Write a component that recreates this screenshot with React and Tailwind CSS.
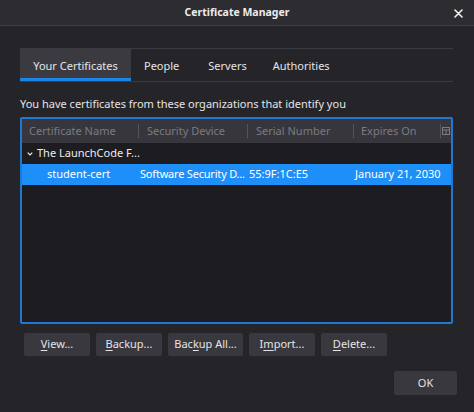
import React from "react";

const font = { fontFamily: '"Noto Sans", "Open Sans", sans-serif' };

function Btn({ children, w }) {
  return (
    <div className={`h-[23px] ${w} bg-[#39383e] rounded-[2px] flex items-center justify-center text-[11px] text-[#e4e4e6] whitespace-nowrap`}>
      {children}
    </div>
  );
}

function U({ children }) {
  return <span className="underline underline-offset-[2px] decoration-[1px]">{children}</span>;
}

export default function App() {
  return (
    <div className="w-[474px] h-[412px] bg-[#252429] flex flex-col overflow-hidden whitespace-nowrap" style={font}>
      <div className="h-[26px] shrink-0 bg-[#2d2c31] border-b border-[#3f3e44] relative flex items-center justify-center">
        <span className="text-[10.5px] font-bold text-[#ececee]">Certificate Manager</span>
        <svg className="absolute right-[11px] top-[9px]" width="9" height="9" viewBox="0 0 9 9">
          <path d="M1 1 L8 8 M8 1 L1 8" stroke="#f0f0f0" strokeWidth="1.6" strokeLinecap="round" />
        </svg>
      </div>
      <div className="flex flex-col pl-[20px] pr-[21px] pt-[22px]">
        <div className="flex h-[34px] border-t border-b border-[#3b3a40] text-[11px] text-[#e4e4e6]">
          <div className="w-[111px] bg-[#3b3a40] flex flex-col">
            <div className="flex-1 flex items-center justify-center pt-[5px]">Your Certificates</div>
            <div className="h-[3px] bg-[#1c86e8]" />
          </div>
          <div className="flex items-center pl-[13px] pt-[3px]">People</div>
          <div className="flex items-center pl-[29px] pt-[3px]">Servers</div>
          <div className="flex items-center pl-[26px] pt-[3px]">Authorities</div>
        </div>
        <div className="mt-[14px] text-[11px] text-[#e4e4e6] leading-[16px]">
          You have certificates from these organizations that identify you
        </div>
        <div className="mt-[5px] h-[207px] border-2 border-[#1f78d1] bg-[#1d1c21] rounded-[2px] flex flex-col text-[11px]">
          <div className="h-[24px] bg-[#37363c] flex items-center text-[#7c7b81]">
            <div className="w-[117px] pl-[7px] border-r border-[#55545a] h-[14px] flex items-center">Certificate Name</div>
            <div className="w-[109px] pl-[8px] border-r border-[#55545a] h-[14px] flex items-center">Security Device</div>
            <div className="w-[106px] pl-[8px] border-r border-[#55545a] h-[14px] flex items-center">Serial Number</div>
            <div className="w-[87px] pl-[7px] border-r border-[#55545a] h-[14px] flex items-center">Expires On</div>
            <div className="flex-1 flex items-center justify-center">
              <svg width="8" height="8" viewBox="0 0 8 8">
                <rect x="0.5" y="0.5" width="7" height="7" fill="none" stroke="#7c7b81" />
                <path d="M0.5 3 H7.5 M4 3 V7.5" stroke="#7c7b81" />
              </svg>
            </div>
          </div>
          <div className="h-[21px] flex items-center text-[#ececee]">
            <svg className="ml-[5px] mr-[4px]" width="6" height="4" viewBox="0 0 6 4">
              <path d="M0.7 0.7 L3 3 L5.3 0.7" stroke="#ececee" strokeWidth="1.2" fill="none" />
            </svg>
            <span>The LaunchCode F...</span>
          </div>
          <div className="h-[21px] bg-[#1e8ef9] flex items-center text-white">
            <div className="w-[118px] pl-[25px]">student-cert</div>
            <div className="w-[109px] tracking-[-0.2px] overflow-hidden">Software Security D...</div>
            <div className="w-[106px]">55:9F:1C:E5</div>
            <div>January 21, 2030</div>
          </div>
        </div>
        <div className="mt-[9px] pl-[4px] flex gap-[6px]">
          <Btn w="w-[66px]"><span><U>V</U>iew...</span></Btn>
          <Btn w="w-[66px]"><span><U>B</U>ackup...</span></Btn>
          <Btn w="w-[75px]"><span>Bac<U>k</U>up All...</span></Btn>
          <Btn w="w-[66px]"><span>I<U>m</U>port...</span></Btn>
          <Btn w="w-[66px]"><span><U>D</U>elete...</span></Btn>
        </div>
        <div className="mt-[15px] flex justify-end mr-[-4px]">
          <Btn w="w-[63px] h-[24px]">OK</Btn>
        </div>
      </div>
    </div>
  );
}
